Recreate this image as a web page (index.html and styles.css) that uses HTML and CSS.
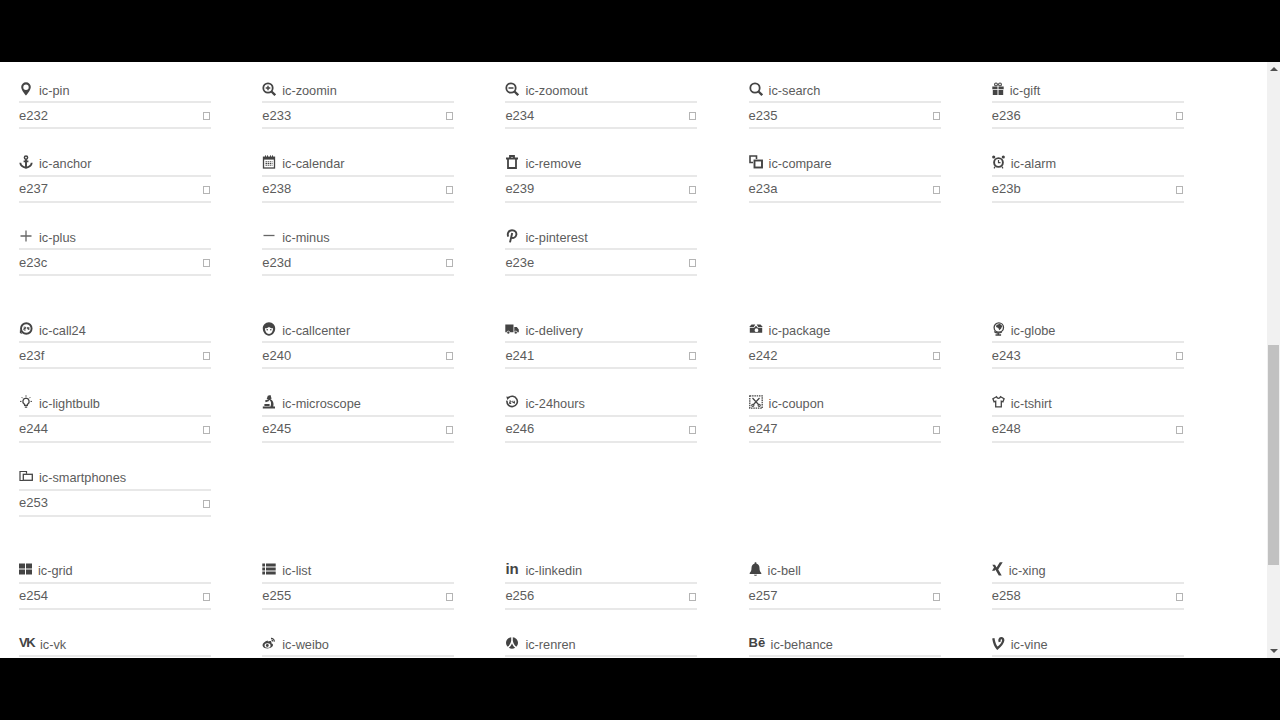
FILE: index.html
```html
<!DOCTYPE html>
<html lang="en">
<head>
  <meta charset="UTF-8" />
  <title>Icon font reference</title>
  <link rel="stylesheet" href="styles.css">
</head>
<body>
  <div class="window">
    <main class="content">

      <section class="glyph-grid">
        <div class="glyph">
          <div class="glyph-name"><svg width="14" height="14" viewBox="0 0 14 14"><path fill-rule="evenodd" d="M7 .3a4.800 4.800 0 0 0-4.800 4.800C2.200 8.300 7 13.700 7 13.700s4.800-5.400 4.800-8.600A4.800 4.800 0 0 0 7 .3zm0 2.200a2.700 2.700 0 1 1 0 5.400 2.700 2.700 0 0 1 0-5.400z"/></svg>ic-pin</div>
          <div class="glyph-code">e232<span class="tofu"></span></div>
        </div>
        <div class="glyph">
          <div class="glyph-name"><svg width="14" height="14" viewBox="0 0 14 14"><circle class="line" cx="6" cy="6" r="4.7" stroke-width="1.800"/><path class="line" stroke-width="2.300" d="M9.500 9.500 13.200 13.200"/><path class="line" stroke-width="1.400" d="M3.700 6h4.600M6 3.700v4.600"/></svg>ic-zoomin</div>
          <div class="glyph-code">e233<span class="tofu"></span></div>
        </div>
        <div class="glyph">
          <div class="glyph-name"><svg width="14" height="14" viewBox="0 0 14 14"><circle class="line" cx="6" cy="6" r="4.7" stroke-width="1.800"/><path class="line" stroke-width="2.300" d="M9.500 9.500 13.200 13.200"/><path class="line" stroke-width="1.500" d="M3.500 6h5"/></svg>ic-zoomout</div>
          <div class="glyph-code">e234<span class="tofu"></span></div>
        </div>
        <div class="glyph">
          <div class="glyph-name"><svg width="14" height="14" viewBox="0 0 14 14"><circle class="line" cx="6" cy="6" r="4.7" stroke-width="1.800"/><path class="line" stroke-width="2.300" d="M9.500 9.500 13.200 13.200"/></svg>ic-search</div>
          <div class="glyph-code">e235<span class="tofu"></span></div>
        </div>
        <div class="glyph">
          <div class="glyph-name"><svg width="12" height="14" viewBox="0 0 12 14"><circle class="line" cx="4" cy="2.400" r="1.400" stroke-width="1.100"/><circle class="line" cx="8" cy="2.400" r="1.400" stroke-width="1.100"/><path d="M.3 4.400h5.200v2.800H.3zM6.500 4.400h5.200v2.800H6.500zM.8 8h4.700v5H.8zM6.500 8h4.700v5H6.500z"/></svg>ic-gift</div>
          <div class="glyph-code">e236<span class="tofu"></span></div>
        </div>

        <div class="glyph">
          <div class="glyph-name"><svg width="14" height="14" viewBox="0 0 14 14"><circle class="line" cx="7" cy="2.600" r="1.600" stroke-width="1.500"/><path class="line" stroke-width="1.900" d="M7 4.200v8.300M4.600 6.400h4.800"/><path class="line" stroke-width="1.900" d="M1.300 7.800c.2 3 3 4.400 5.700 4.900 2.700-.5 5.500-1.900 5.700-4.900"/></svg>ic-anchor</div>
          <div class="glyph-code">e237<span class="tofu"></span></div>
        </div>
        <div class="glyph">
          <div class="glyph-name"><svg width="14" height="14" viewBox="0 0 14 14"><rect class="line" x="1.500" y="2.200" width="11" height="10.800" stroke-width="1.300"/><path d="M1.500 2h11v2.600h-11z"/><path class="line" stroke-width="1" d="M3.500 .4V2M5.500 .4V2M8.500 .4V2M10.500 .4V2"/><path class="line" stroke-width="1" d="M3.500 6.800h7M3.500 8.500h7M3.500 10.200h7" stroke-dasharray="1.500 .6"/></svg>ic-calendar</div>
          <div class="glyph-code">e238<span class="tofu"></span></div>
        </div>
        <div class="glyph">
          <div class="glyph-name"><svg width="14" height="14" viewBox="0 0 14 14"><path class="line" stroke-width="1.800" d="M1 3.500h12M3 3.500V13h8V3.500M5 3.500V1h4v2.500"/></svg>ic-remove</div>
          <div class="glyph-code">e239<span class="tofu"></span></div>
        </div>
        <div class="glyph">
          <div class="glyph-name"><svg width="14" height="14" viewBox="0 0 14 14"><path class="line" stroke-width="1.600" d="M4 7.500H1V1h6.500v3"/><rect class="line" x="5.500" y="5.500" width="7.500" height="7" stroke-width="1.900"/></svg>ic-compare</div>
          <div class="glyph-code">e23a<span class="tofu"></span></div>
        </div>
        <div class="glyph">
          <div class="glyph-name"><svg width="13" height="14" viewBox="0 0 13 14"><circle class="line" cx="6.500" cy="7.500" r="4.400" stroke-width="1.900"/><circle cx="1.700" cy="2" r="1.600"/><circle cx="11.300" cy="2" r="1.600"/><path class="line" stroke-width="1.200" d="M6.500 5v2.700h2M3.200 11.500 2 13.400M9.800 11.500 11 13.400"/></svg>ic-alarm</div>
          <div class="glyph-code">e23b<span class="tofu"></span></div>
        </div>

        <div class="glyph">
          <div class="glyph-name"><svg width="14" height="14" viewBox="0 0 14 14"><path class="line thin" stroke-width="1.300" d="M7 1.500v11M1.500 7h11"/></svg>ic-plus</div>
          <div class="glyph-code">e23c<span class="tofu"></span></div>
        </div>
        <div class="glyph">
          <div class="glyph-name"><svg width="14" height="14" viewBox="0 0 14 14"><path class="line thin" stroke-width="1.300" d="M1.500 6.500h11"/></svg>ic-minus</div>
          <div class="glyph-code">e23d<span class="tofu"></span></div>
        </div>
        <div class="glyph">
          <div class="glyph-name"><svg width="14" height="14" viewBox="0 0 14 14"><path class="line" stroke-width="1.900" d="M3.300 7.600C1.800 4.400 3.800 1.200 7 1.200s4.800 2.300 4.300 4.700c-.5 2.400-3 3.700-4.700 2.600M7.200 4 5 13.400"/></svg>ic-pinterest</div>
          <div class="glyph-code">e23e<span class="tofu"></span></div>
        </div>
      </section>

      <section class="glyph-grid">
        <div class="glyph">
          <div class="glyph-name"><svg width="14" height="14" viewBox="0 0 14 14"><circle class="line" cx="7.300" cy="6.500" r="5.300" stroke-width="1.900"/><path class="line" stroke-width="1" d="M4.700 5.200h1.800v1.300H4.900V8h1.800M8.300 5v1.800h1.800M9.800 5v3"/><path d="M1 7l2.200 5-2.400-1z"/></svg>ic-call24</div>
          <div class="glyph-code">e23f<span class="tofu"></span></div>
        </div>
        <div class="glyph">
          <div class="glyph-name"><svg width="14" height="14" viewBox="0 0 14 14"><path d="M7 .2C3.300.2.600 3.200.8 6.800c.2 3.800 3 6.900 6.200 6.900s6-3.100 6.200-6.900C13.400 3.200 10.700.2 7 .2z"/><path fill="#fff" d="M3 6.200c1.500.3 3-.2 4-1.400 1 1.200 2.500 1.700 4 1.400.2 2.900-1.700 5.700-4 5.700S2.800 9.100 3 6.200z"/><circle cx="5.200" cy="7.800" r=".8"/><circle cx="8.800" cy="7.800" r=".8"/></svg>ic-callcenter</div>
          <div class="glyph-code">e240<span class="tofu"></span></div>
        </div>
        <div class="glyph">
          <div class="glyph-name"><svg width="14" height="14" viewBox="0 0 14 14"><path d="M.3 2.500h8.200v7.700H.3zM9.300 5h2.500l2 2.400v2.800H9.300z"/><circle cx="3.300" cy="10.600" r="1.500" stroke="#fff" stroke-width=".7"/><circle cx="10.800" cy="10.600" r="1.500" stroke="#fff" stroke-width=".7"/></svg>ic-delivery</div>
          <div class="glyph-code">e241<span class="tofu"></span></div>
        </div>
        <div class="glyph">
          <div class="glyph-name"><svg width="14" height="14" viewBox="0 0 14 14"><path fill-rule="evenodd" d="M2.500 2.500h3.800L4.800 5H.2zM7.700 2.500h3.800L13.800 5H9.200zM.8 5.800h4.400L7 3.800l1.800 2h4.400v5H.8zM7.500 6.300a1.900 1.900 0 1 0 0 3.800 1.900 1.900 0 0 0 0-3.800z"/></svg>ic-package</div>
          <div class="glyph-code">e242<span class="tofu"></span></div>
        </div>
        <div class="glyph">
          <div class="glyph-name"><svg width="13" height="14" viewBox="0 0 13 14"><circle class="line" cx="6.800" cy="5.500" r="4.700" stroke-width="1.300"/><path d="M4.500 3 7.800 1.800 10.300 4 9 6.800 7.300 8.300 6.300 6 4 5z"/><path class="line" stroke-width="1.400" d="M2.300 9.500c1.800 1.800 5.300 2 7.500.5M6.300 11v1.500M3.500 13h5.600"/></svg>ic-globe</div>
          <div class="glyph-code">e243<span class="tofu"></span></div>
        </div>

        <div class="glyph">
          <div class="glyph-name"><svg width="14" height="14" viewBox="0 0 14 14"><path class="line" stroke-width="1.300" d="M7 3.200a3.200 3.200 0 0 0-1.800 5.800c.4.400.5.900.5 1.400h2.600c0-.5.100-1 .5-1.400A3.200 3.200 0 0 0 7 3.200zM5.800 12.200h2.400"/><path class="line" stroke-width="1" d="M7 .3v1.400M1 6.400h1.500M11.500 6.400H13M2.700 2.200l1.100 1.100M11.300 2.200l-1.100 1.100"/></svg>ic-lightbulb</div>
          <div class="glyph-code">e244<span class="tofu"></span></div>
        </div>
        <div class="glyph">
          <div class="glyph-name"><svg width="14" height="14" viewBox="0 0 14 14"><path d="M5.800.8 8.500.1l1.100 3.600-1.300.4c2.800 1.300 3.800 4.400 3 7.300H8.500c1.200-2.800.5-5.400-1.100-6.400l-.9.400-.5-1.300-1.300-.2zM2.400 8.900h5.200v2H2.400zM.8 11.400h12.200v2.200H.8z"/><path d="M3 5.600 6.400 4.200l.7 1.700-3.400 1.400z"/></svg>ic-microscope</div>
          <div class="glyph-code">e245<span class="tofu"></span></div>
        </div>
        <div class="glyph">
          <div class="glyph-name"><svg width="14" height="14" viewBox="0 0 14 14"><path class="line" stroke-width="1.600" d="M3.400 2.800a5.200 5.200 0 1 1-1.400 2.800"/><path d="M1.300 1.400 5 2.200 2.300 5z"/><path class="line" stroke-width="1" d="M4.300 6H6v1.200H4.500v1.300h1.700M7.800 5.800v1.700h2M9.300 5.800v2.900"/></svg>ic-24hours</div>
          <div class="glyph-code">e246<span class="tofu"></span></div>
        </div>
        <div class="glyph">
          <div class="glyph-name"><svg width="14" height="14" viewBox="0 0 14 14"><rect class="line" x=".8" y=".8" width="12.400" height="12.400" stroke-width="1.300" stroke-dasharray="1.500 .8"/><path class="line" stroke-width="1.200" d="M3.500 3l6 6.500M10.500 3l-6 6.500"/><circle class="line" cx="3.800" cy="10.300" r="1.100" stroke-width="1.100"/><circle class="line" cx="10.200" cy="10.300" r="1.100" stroke-width="1.100"/></svg>ic-coupon</div>
          <div class="glyph-code">e247<span class="tofu"></span></div>
        </div>
        <div class="glyph">
          <div class="glyph-name"><svg width="13" height="14" viewBox="0 0 13 14"><path class="line" stroke-width="1.300" d="M4.500 1.800 .9 3.800l1.200 3 1.600-.6v5.600h5.600V6.200l1.600.6 1.200-3-3.600-2c-.4 1-1.100 1.500-2 1.500s-1.600-.5-2-1.500z"/></svg>ic-tshirt</div>
          <div class="glyph-code">e248<span class="tofu"></span></div>
        </div>

        <div class="glyph">
          <div class="glyph-name"><svg width="14" height="14" viewBox="0 0 14 14"><path class="line" stroke-width="1.200" d="M4 11.500H1V2.500h6.500v2.300"/><rect class="line" x="4.300" y="5.300" width="9" height="6" stroke-width="1.300"/></svg>ic-smartphones</div>
          <div class="glyph-code">e253<span class="tofu"></span></div>
        </div>
      </section>

      <section class="glyph-grid">
        <div class="glyph">
          <div class="glyph-name"><svg width="13" height="14" viewBox="0 0 13 14"><path d="M0 1.500h6v5H0zM7 1.500h6v5H7zM0 7.500h6v5H0zM7 7.500h6v5H7z"/></svg>ic-grid</div>
          <div class="glyph-code">e254<span class="tofu"></span></div>
        </div>
        <div class="glyph">
          <div class="glyph-name"><svg width="14" height="14" viewBox="0 0 14 14"><path d="M.3 1.500H3v2.900H.3zM4 1.500h9.700v2.900H4zM.3 5.500H3v2.900H.3zM4 5.500h9.700v2.900H4zM.3 9.500H3v2.900H.3zM4 9.500h9.700v2.900H4z"/></svg>ic-list</div>
          <div class="glyph-code">e255<span class="tofu"></span></div>
        </div>
        <div class="glyph">
          <div class="glyph-name"><span class="brand">in</span>ic-linkedin</div>
          <div class="glyph-code">e256<span class="tofu"></span></div>
        </div>
        <div class="glyph">
          <div class="glyph-name"><svg width="13" height="14" viewBox="0 0 13 14"><path d="M6.500.3c.6 0 1 .4 1 1v.5c2 .5 3 2 3 4.200 0 2.600.6 3.800 1.800 4.900v1.100H.7V11C1.900 9.900 2.500 8.600 2.500 6c0-2.200 1-3.700 3-4.200v-.5c0-.6.400-1 1-1zM5 12.700h3c0 .7-.7 1.100-1.500 1.100S5 13.400 5 12.700z"/></svg>ic-bell</div>
          <div class="glyph-code">e257<span class="tofu"></span></div>
        </div>
        <div class="glyph">
          <div class="glyph-name"><svg width="11" height="14" viewBox="0 0 11 14"><path d="M7.800.3h2.900L6.200 7.600l3.500 6H6.800L3.300 7.600zM.3 2.800H3l1.600 2.700-2 3.300H0l2-3.200z"/></svg>ic-xing</div>
          <div class="glyph-code">e258<span class="tofu"></span></div>
        </div>

        <div class="glyph">
          <div class="glyph-name"><span class="brand brand-vk">VK</span>ic-vk</div>
        </div>
        <div class="glyph">
          <div class="glyph-name"><svg width="14" height="14" viewBox="0 0 14 14"><path fill-rule="evenodd" d="M5.800 4.500C2.800 5.200.5 7.400.5 9.200c0 2 2.400 3.300 5.100 3.300 3.100 0 5.400-1.800 5.400-3.400 0-1.200-1.100-1.600-1.700-1.800.3-.9.300-1.800-.5-2.200-.7-.4-1.800-.2-3 .4zM5.500 7.200a3 2.300 0 1 0 .1 4.600 3 2.300 0 0 0-.1-4.600z"/><circle cx="5.300" cy="9.500" r="1.400"/><path class="line" stroke-width="1.200" d="M9 2.300c1.700-.2 3.500 1.200 3.300 3.300M9.300 4c.8-.1 1.500.6 1.400 1.500"/></svg>ic-weibo</div>
        </div>
        <div class="glyph">
          <div class="glyph-name"><svg width="14" height="14" viewBox="0 0 14 14"><path d="M6.200 1.200C3.300 1.500 1 3.900 1 6.800c0 1.500.6 2.900 1.700 3.900C4.700 9.300 5.900 7 6.200 4.500zM7.800 1.200c2.900.3 5.200 2.700 5.200 5.600 0 1.500-.6 2.900-1.700 3.900C9.300 9.300 8.100 7 7.800 4.500zM7 7.500c.8 1.900 1.900 3.300 3.200 4.300-2 1.200-4.400 1.200-6.400 0C5.100 10.800 6.200 9.400 7 7.500z"/></svg>ic-renren</div>
        </div>
        <div class="glyph">
          <div class="glyph-name"><span class="brand brand-be">Bē</span>ic-behance</div>
        </div>
        <div class="glyph">
          <div class="glyph-name"><svg width="13" height="14" viewBox="0 0 13 14"><path class="line" stroke-width="2.300" d="M1.300 2.200C2 6.500 3.200 10 5.400 12.400c2.300-2 5.400-5 5.800-7.800.2-1.500-.7-2.600-2-2.500-1.500.1-2.200 1.800-1.400 3.800"/></svg>ic-vine</div>
        </div>
      </section>

    </main>
    <aside class="scrollbar">
      <span class="arrow arrow-up"></span>
      <span class="thumb"></span>
      <span class="arrow arrow-down"></span>
    </aside>
  </div>
</body>
</html>
```

FILE: styles.css
```css
* {
  box-sizing: border-box;
  padding: 0;
  margin: 0;
}

body {
  height: 720px;
  padding: 62px 0;
  overflow: hidden;
  background: #000;
  font-family: "Liberation Sans", Arial, sans-serif;
  font-size: 13px;
  color: #5c5c5c;
}

.window {
  display: flex;
  height: 596px;
  overflow: hidden;
  background: #fff;
}

.content {
  flex: 1;
  padding: 15px 0 0 19px;
  overflow: hidden;
}

.glyph-grid {
  display: grid;
  grid-template-columns: repeat(5, 243.2px);
  grid-auto-rows: 73.67px;
  margin-bottom: 19.33px;
}

.glyph {
  width: 192px;
}

.glyph-name {
  display: flex;
  align-items: center;
  height: 26px;
  padding-top: 2px;
  font-size: 12.75px;
  border-bottom: 2px solid #e8e8e8;
  white-space: nowrap;
}

.glyph-name svg {
  flex: none;
  margin-right: 6px;
  margin-top: -3px;
  fill: #444;
}

.line {
  fill: none;
  stroke: #444;
}

.thin {
  stroke: #666;
}

.brand {
  flex: none;
  width: 14px;
  margin-right: 6px;
  margin-top: -3px;
  font-size: 15px;
  font-weight: bold;
  line-height: 14px;
  color: #444;
}

.brand-vk {
  width: 15px;
  font-size: 13px;
  letter-spacing: -1.5px;
}

.brand-be {
  width: 16px;
  font-size: 13px;
}

.glyph-code {
  display: flex;
  align-items: center;
  justify-content: space-between;
  height: 26px;
  padding-right: 1px;
  border-bottom: 2px solid #e8e8e8;
}

/* the browser's box for a glyph it could not find */
.tofu {
  width: 7px;
  height: 8px;
  margin-top: 2px;
  border: 1px solid #b4b4b4;
}

.scrollbar {
  display: flex;
  flex-direction: column;
  align-items: center;
  flex: none;
  width: 13px;
  background: #f1f1f1;
}

.thumb {
  width: 11px;
  height: 220px;
  margin-top: 274px;
  background: #c1c1c1;
}

.arrow {
  width: 0;
  height: 0;
  border-left: 4px solid transparent;
  border-right: 4px solid transparent;
}

.arrow-up {
  margin-top: 5px;
  border-bottom: 4px solid #505050;
}

.arrow-down {
  margin-top: auto;
  margin-bottom: 5px;
  border-top: 4px solid #505050;
}
```
